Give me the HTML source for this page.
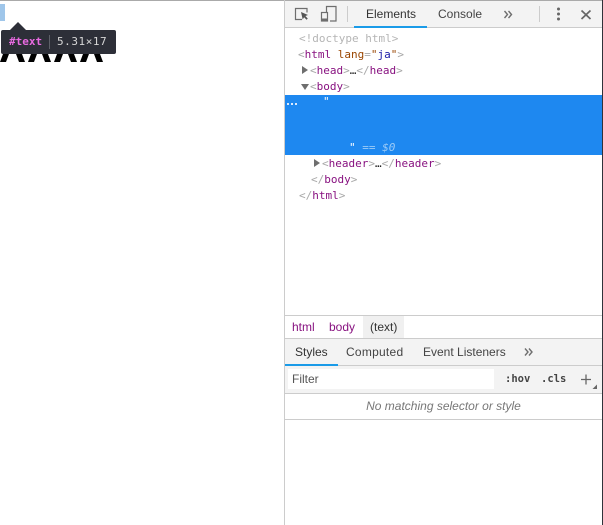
<!DOCTYPE html>
<html lang="ja"><head><meta charset="utf-8"><title>DevTools</title>
<style>
html,body{margin:0;padding:0;width:603px;height:525px;overflow:hidden;background:#fff}
.a{position:absolute;white-space:pre}
.s{font-family:"Liberation Sans",sans-serif;font-size:12px;color:#333}
.m{font-family:"DejaVu Sans Mono","Liberation Mono",monospace;font-size:11px;line-height:16px;height:16px;color:#a8a8a8}
.t{color:#881280}.n{color:#994500}.v{color:#1a1aa6}.b{color:#222}
.r{position:absolute;width:0;height:0;border-style:solid;border-color:transparent}
</style></head><body>
<div class="a" style="left:0;top:0;width:603px;height:1px;background:#aaa"></div>
<div class="a" style="left:0;top:4px;width:5px;height:17px;background:#9fc6ea"></div>
<svg class="a" style="left:0;top:50px" width="110" height="12"><path d="M3 4h6L6 12H0zM16 4h6l3 8h-6zM31 4h6l-3 8h-6zM42 4h6l3 8h-6zM57 4h6l-3 8h-6zM68 4h6l3 8h-6zM83 4h6l-3 8h-6zM94 4h6l3 8h-6z" fill="#000"/></svg>
<svg class="a" style="left:9px;top:22px" width="18" height="9"><path d="M9 0L18 9H0z" fill="#2d2f38"/></svg>
<div class="a" style="left:1px;top:30px;width:115px;height:24px;background:#2d2f38;border-radius:2px"></div>
<div class="a" style="left:9px;top:34px;font:bold 11px/16px 'DejaVu Sans Mono',monospace;color:#e86ae0">#text</div>
<div class="a" style="left:49px;top:35px;width:1px;height:14px;background:#5e6068"></div>
<div class="a" style="left:57px;top:34px;font:11px/16px 'DejaVu Sans Mono',monospace;color:#d6d6d6;letter-spacing:.55px">5.31×17</div>

<div class="a" style="left:284px;top:0;width:1px;height:525px;background:#ccc"></div>
<div class="a" style="left:602px;top:0;width:1px;height:525px;background:#30323a"></div>
<div class="a" style="left:285px;top:1px;width:317px;height:26px;background:#f3f3f3;border-bottom:1px solid #ccc"></div>
<svg class="a" style="left:285px;top:1px" width="317" height="26" fill="none">
<path d="M17 18.500h-6.500v-11h11.500v4" stroke="#6e6e6e" stroke-width="1.200"/>
<path d="M16 11l7 3-2.600 1 2.400 2.600-1.300 1.200-2.400-2.600-1.400 2.300z" fill="#555"/>
<path d="M41.500 11V5.500h9.500v14.500h-6" stroke="#6e6e6e" stroke-width="1.200"/>
<rect x="36.500" y="11.500" width="6" height="8.500" stroke="#6e6e6e" stroke-width="1.200"/>
<rect x="36" y="17.500" width="7" height="3" fill="#6e6e6e"/>
<path d="M62.500 5v16" stroke="#ccc"/>
<path d="M219.500 10l3 3.500-3 3.500M223.500 10l3 3.500-3 3.500" stroke="#6e6e6e" stroke-width="1.400"/>
<path d="M254.500 5v16" stroke="#ccc"/>
<circle cx="273.500" cy="8" r="1.500" fill="#666"/><circle cx="273.500" cy="13" r="1.500" fill="#666"/><circle cx="273.500" cy="18" r="1.500" fill="#666"/>
<path d="M296.500 9.500l9 8.500M305.500 9.500l-9 8.500" stroke="#666" stroke-width="1.700"/>
</svg>
<div class="a s" style="left:366px;top:7px;line-height:14px;color:#333">Elements</div>
<div class="a s" style="left:438px;top:7px;line-height:14px;color:#444">Console</div>
<div class="a" style="left:354px;top:26px;width:73px;height:2px;background:#1a9be8"></div>

<div class="a m" style="left:299px;top:31px;color:#b5b5b5">&lt;!doctype html&gt;</div>
<div class="a m" style="left:298px;top:47px">&lt;<span class="t">html</span> <span class="n">lang</span>=<span class="n">"</span><span class="v">ja</span><span class="n">"</span>&gt;</div>
<div class="r" style="left:302px;top:66px;border-width:4px 0 4px 6px;border-left-color:#6e6e6e"></div>
<div class="a m" style="left:310px;top:63px">&lt;<span class="t">head</span>&gt;<span class="b">…</span>&lt;/<span class="t">head</span>&gt;</div>
<div class="r" style="left:301px;top:84px;border-width:6px 4px 0 4px;border-top-color:#6e6e6e"></div>
<div class="a m" style="left:310px;top:79px">&lt;<span class="t">body</span>&gt;</div>
<div class="a" style="left:285px;top:95px;width:317px;height:60px;background:#1e88f0"></div>
<div class="a m" style="left:323px;top:94px;color:#fff">"</div>
<div class="a" style="left:287px;top:103px;width:2px;height:2px;background:#dbeafd;box-shadow:4px 0 #dbeafd,8px 0 #dbeafd"></div>
<div class="a m" style="left:349px;top:140px;color:#fff">"<span style="color:#9ccbf7"> == <i>$0</i></span></div>
<div class="r" style="left:314px;top:159px;border-width:4px 0 4px 6px;border-left-color:#6e6e6e"></div>
<div class="a m" style="left:322px;top:156px">&lt;<span class="t">header</span>&gt;<span class="b">…</span>&lt;/<span class="t">header</span>&gt;</div>
<div class="a m" style="left:311px;top:172px">&lt;/<span class="t">body</span>&gt;</div>
<div class="a m" style="left:299px;top:188px">&lt;/<span class="t">html</span>&gt;</div>

<div class="a" style="left:285px;top:315px;width:317px;height:1px;background:#ccc"></div>
<div class="a" style="left:363px;top:316px;width:41px;height:22px;background:#f0f0f0"></div>
<div class="a s" style="left:292px;top:320px;line-height:14px;color:#881280">html</div>
<div class="a s" style="left:329px;top:320px;line-height:14px;color:#881280">body</div>
<div class="a s" style="left:370px;top:320px;line-height:14px;color:#333">(text)</div>
<div class="a" style="left:285px;top:338px;width:317px;background:#f3f3f3;border-top:1px solid #ccc;border-bottom:1px solid #ccc;box-sizing:border-box;height:28px"></div>
<div class="a s" style="left:295px;top:345px;line-height:14px">Styles</div>
<div class="a s" style="left:346px;top:345px;line-height:14px;color:#444;letter-spacing:.25px">Computed</div>
<div class="a s" style="left:423px;top:345px;line-height:14px;color:#444">Event Listeners</div>
<svg class="a" style="left:524px;top:345px" width="14" height="14" fill="none"><path d="M1 3.500l3 3.500-3 3.500M5 3.500l3 3.500-3 3.500" stroke="#6e6e6e" stroke-width="1.400"/></svg>
<div class="a" style="left:285px;top:364px;width:53px;height:2px;background:#1a9be8"></div>
<div class="a" style="left:285px;top:366px;width:317px;height:27px;background:#f3f3f3;border-bottom:1px solid #ccc"></div>
<div class="a" style="left:288px;top:369px;width:206px;height:20px;background:#fff"></div>
<div class="a s" style="left:292px;top:372px;line-height:14px;color:#555">Filter</div>
<div class="a" style="left:505px;top:372px;font:bold 10.5px/14px 'DejaVu Sans Mono',monospace;color:#444">:hov</div>
<div class="a" style="left:541px;top:372px;font:bold 10.5px/14px 'DejaVu Sans Mono',monospace;color:#444">.cls</div>
<svg class="a" style="left:580px;top:372px" width="20" height="18" fill="none"><path d="M6 2.500v10M1 7.500h10" stroke="#666" stroke-width="1.300"/><path d="M17 17v-4.500l-4.500 4.500z" fill="#666"/></svg>
<div class="a s" style="left:285px;width:317px;top:399px;line-height:14px;text-align:center;font-style:italic;color:#777">No matching selector or style</div>
<div class="a" style="left:285px;top:419px;width:317px;height:1px;background:#ccc"></div>
</body></html>
